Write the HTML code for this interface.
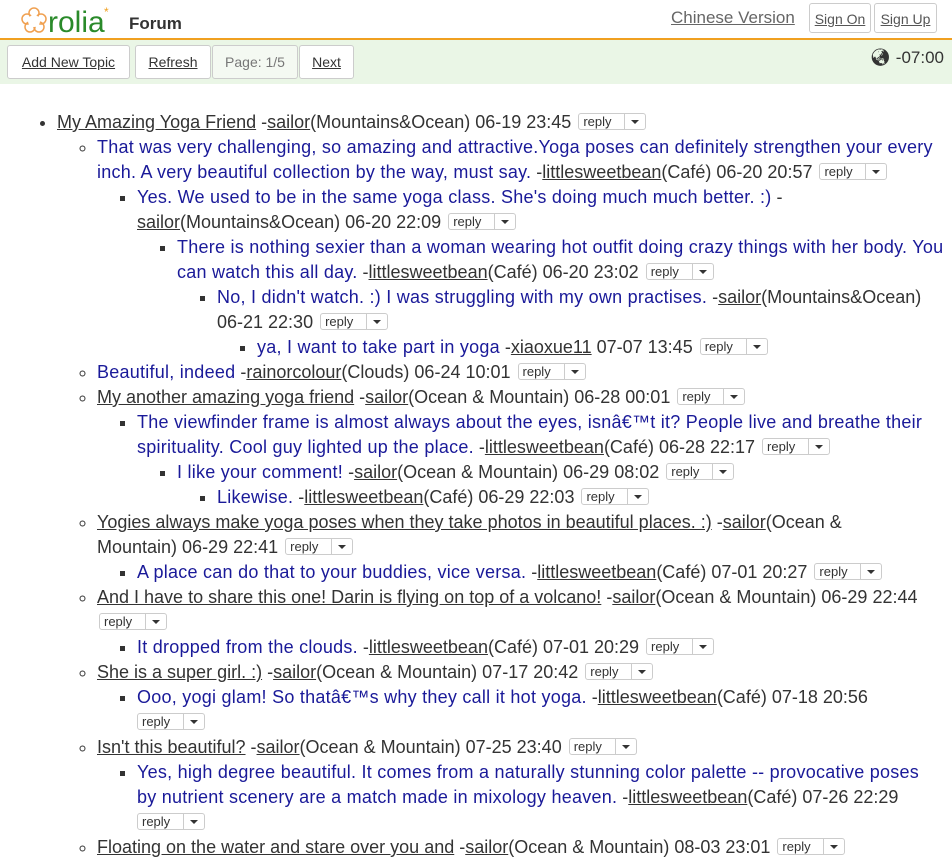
<!DOCTYPE html>
<html><head><meta charset="utf-8"><style>
html,body{margin:0;padding:0;background:#fff;width:952px;height:843px;overflow:hidden}
body{font-family:"Liberation Sans",Arial,sans-serif;color:#333}
.hdr{position:absolute;left:0;top:0;width:952px;height:38px;border-bottom:2px solid #f0a020;background:#fff}
.logo{position:absolute;left:20px;top:5px}
.forum{position:absolute;left:129px;top:14px;font-size:17px;font-weight:bold;color:#333}
.cv{position:absolute;left:671px;top:8px;font-size:17px;color:#666;text-decoration:underline}
.hb{position:absolute;top:3px;height:30px;border:1px solid #ccc;border-radius:3px;font-size:14px;color:#555;text-decoration:underline;line-height:30px;text-align:center;box-sizing:border-box;background:#fff}
.bar{position:absolute;left:0;top:40px;width:952px;height:44px;background:#eaf6e6}
.tb{position:absolute;top:5px;height:34px;border:1px solid #ccc;border-radius:3px;background:#fff;font-size:14px;color:#333;line-height:32px;text-align:center;box-sizing:border-box;text-decoration:underline}
.tz{position:absolute;right:8px;top:8px;font-size:17px;color:#333}
.main{position:absolute;left:0;top:110px;width:952px}
ul{margin:0;padding-left:40px}
.main>ul{padding-left:57px;padding-right:0}
li{font-size:18px;line-height:25px}
ul ul{list-style-type:circle}
ul ul ul{list-style-type:square}
.b{color:#1a1a99;letter-spacing:0.25px}
a{color:#333;text-decoration:underline}
.r{display:inline-block;vertical-align:middle;height:17px;width:68px;margin-left:2px;border:1px solid #ccc;border-radius:3px;box-sizing:border-box;font-size:13px;line-height:15px;color:#333;position:relative;margin-top:-3px;background:#fff;letter-spacing:0}
.r span{position:absolute;left:4px;top:0}
.r i{position:absolute;left:45px;top:0;height:15px;border-left:1px solid #ccc;width:21px}
.r i:after{content:"";position:absolute;left:6px;top:6px;border-left:4px solid transparent;border-right:4px solid transparent;border-top:4px solid #333}
</style></head><body>
<div class="hdr">
<svg class="logo" width="105" height="30" viewBox="0 0 105 30">
<g fill="none" stroke="#f0a050" stroke-width="1.5"><circle cx="14" cy="8" r="5"/><circle cx="7" cy="14" r="5"/><circle cx="21" cy="14" r="5"/><circle cx="10" cy="22" r="5"/><circle cx="19" cy="22" r="5"/></g>
<circle cx="14" cy="16" r="6" fill="#fff"/>
<text x="28" y="27" font-family="Liberation Sans,sans-serif" font-size="30" fill="#2a8a2a">rolia</text>
<text x="84" y="11" font-size="12" fill="#f0a020" font-family="Liberation Sans,sans-serif">*</text>
</svg>
<div class="forum">Forum</div>
<div class="cv">Chinese Version</div>
<div class="hb" style="left:809px;width:62px">Sign On</div>
<div class="hb" style="left:874px;width:63px">Sign Up</div>
</div>
<div class="bar">
<div class="tb" style="left:7px;width:123px">Add New Topic</div>
<div class="tb" style="left:135px;width:76px">Refresh</div>
<div class="tb" style="left:212px;width:86px;text-decoration:none;color:#777;background:#f4f9f2">Page: 1/5</div>
<div class="tb" style="left:299px;width:55px">Next</div>
<div class="tz">&#x1F30F;&#xFE0E; -07:00</div>
</div>
<div class="main"><ul>
<li><a>My Amazing Yoga Friend</a> -<a>sailor</a>(Mountains&amp;Ocean) 06-19 23:45 <span class="r"><span>reply</span><i></i></span>
<ul><li><span class="b">That was very challenging, so amazing and attractive.Yoga poses can definitely strengthen your every inch. A very beautiful collection by the way, must say.</span> -<a>littlesweetbean</a>(Café) 06-20 20:57 <span class="r"><span>reply</span><i></i></span>
<ul><li><span class="b">Yes. We used to be in the same yoga class. She's doing much much better. :)</span> -<a>sailor</a>(Mountains&amp;Ocean) 06-20 22:09 <span class="r"><span>reply</span><i></i></span>
<ul><li><span class="b">There is nothing sexier than a woman wearing hot outfit doing crazy things with her body. You can watch this all day.</span> -<a>littlesweetbean</a>(Café) 06-20 23:02 <span class="r"><span>reply</span><i></i></span>
<ul><li><span class="b">No, I didn't watch. :) I was struggling with my own practises.</span> -<a>sailor</a>(Mountains&amp;Ocean) 06-21 22:30 <span class="r"><span>reply</span><i></i></span>
<ul><li><span class="b">ya, I want to take part in yoga</span> -<a>xiaoxue11</a> 07-07 13:45 <span class="r"><span>reply</span><i></i></span></li></ul>
</li></ul></li></ul></li></ul></li>
<li><span class="b">Beautiful, indeed</span> -<a>rainorcolour</a>(Clouds) 06-24 10:01 <span class="r"><span>reply</span><i></i></span></li>
<li><a>My another amazing yoga friend</a> -<a>sailor</a>(Ocean &amp; Mountain) 06-28 00:01 <span class="r"><span>reply</span><i></i></span>
<ul><li><span class="b">The viewfinder frame is almost always about the eyes, isnâ€™t it? People live and breathe their spirituality. Cool guy lighted up the place.</span> -<a>littlesweetbean</a>(Café) 06-28 22:17 <span class="r"><span>reply</span><i></i></span>
<ul><li><span class="b">I like your comment!</span> -<a>sailor</a>(Ocean &amp; Mountain) 06-29 08:02 <span class="r"><span>reply</span><i></i></span>
<ul><li><span class="b">Likewise.</span> -<a>littlesweetbean</a>(Café) 06-29 22:03 <span class="r"><span>reply</span><i></i></span></li></ul>
</li></ul></li></ul></li>
<li><a>Yogies always make yoga poses when they take photos in beautiful places. :)</a> -<a>sailor</a>(Ocean &amp;<br>Mountain) 06-29 22:41 <span class="r"><span>reply</span><i></i></span>
<ul><li><span class="b">A place can do that to your buddies, vice versa.</span> -<a>littlesweetbean</a>(Café) 07-01 20:27 <span class="r"><span>reply</span><i></i></span></li></ul></li>
<li><a>And I have to share this one! Darin is flying on top of a volcano!</a> -<a>sailor</a>(Ocean &amp; Mountain) 06-29 22:44 <span class="r"><span>reply</span><i></i></span>
<ul><li><span class="b">It dropped from the clouds.</span> -<a>littlesweetbean</a>(Café) 07-01 20:29 <span class="r"><span>reply</span><i></i></span></li></ul></li>
<li><a>She is a super girl. :)</a> -<a>sailor</a>(Ocean &amp; Mountain) 07-17 20:42 <span class="r"><span>reply</span><i></i></span>
<ul><li><span class="b">Ooo, yogi glam! So thatâ€™s why they call it hot yoga.</span> -<a>littlesweetbean</a>(Café) 07-18 20:56<br><span class="r" style="margin-left:0"><span>reply</span><i></i></span></li></ul></li>
<li><a>Isn't this beautiful?</a> -<a>sailor</a>(Ocean &amp; Mountain) 07-25 23:40 <span class="r"><span>reply</span><i></i></span>
<ul><li><span class="b">Yes, high degree beautiful. It comes from a naturally stunning color palette -- provocative poses<br>by nutrient scenery are a match made in mixology heaven.</span> -<a>littlesweetbean</a>(Café) 07-26 22:29<br><span class="r" style="margin-left:0"><span>reply</span><i></i></span></li></ul></li>
<li><a>Floating on the water and stare over you and</a> -<a>sailor</a>(Ocean &amp; Mountain) 08-03 23:01 <span class="r"><span>reply</span><i></i></span></li>
</ul></ul></div>
</body></html>
